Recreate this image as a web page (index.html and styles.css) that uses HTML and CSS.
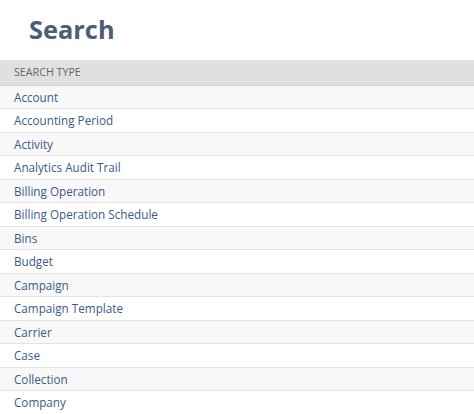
FILE: index.html
```html
<!DOCTYPE html>
<html>
<head>
<meta charset="utf-8">
<link rel="stylesheet" href="styles.css">
</head>
<body>
<h1 class="title">Search</h1>
<div class="list">
  <div class="list-head">SEARCH TYPE</div>
  <div class="row odd">Account</div>
  <div class="row">Accounting Period</div>
  <div class="row odd">Activity</div>
  <div class="row">Analytics Audit Trail</div>
  <div class="row odd">Billing Operation</div>
  <div class="row">Billing Operation Schedule</div>
  <div class="row odd">Bins</div>
  <div class="row">Budget</div>
  <div class="row odd">Campaign</div>
  <div class="row">Campaign Template</div>
  <div class="row odd">Carrier</div>
  <div class="row">Case</div>
  <div class="row odd">Collection</div>
  <div class="row">Company</div>
</div>
</body>
</html>
```
FILE: styles.css
```css
html, body {
  margin: 0;
  padding: 0;
  background: #ffffff;
  font-family: "Open Sans", "Liberation Sans", sans-serif;
}
.title {
  margin: 12px 0 0 29px;
  font-size: 25.4px;
  font-weight: 700;
  line-height: 35px;
  color: #4d5d75;
}
.list {
  margin-top: 13px;
  display: flex;
  flex-direction: column;
}
.list-head {
  height: 25.5px;
  display: flex;
  align-items: center;
  padding-left: 14px;
  background: #e0e0e0;
  color: #666666;
  font-size: 10.7px;
  border-bottom: 1px solid #d6d6d6;
  box-sizing: border-box;
}
.row {
  height: 23.5px;
  box-sizing: border-box;
  display: flex;
  align-items: center;
  padding-left: 14px;
  font-size: 11.7px;
  color: #3d5a86;
  border-bottom: 1px solid #e4e4e4;
  background: #ffffff;
}
.row.odd {
  background: #f8f8f8;
}
```
